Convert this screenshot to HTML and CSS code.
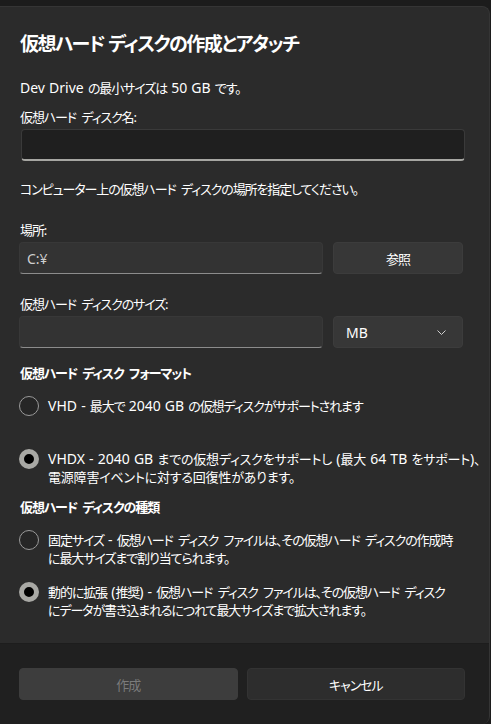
FILE: index.html
```html
<!DOCTYPE html>
<html lang="ja">
<head>
<meta charset="utf-8">
<title>仮想ハード ディスクの作成とアタッチ</title>
<link rel="stylesheet" href="styles.css">
</head>
<body>
<div class="dialog">
  <div class="content">
    <h1 class="title">仮想ハード ディスクの作成とアタッチ</h1>
    <p class="text t-dev"><span class="en">Dev Drive </span>の最小サイズは<span class="en"> 50 GB </span>です。</p>
    <p class="text t-name">仮想ハード ディスク名:</p>
    <div class="field field-focus"></div>
    <p class="text t-loc-desc">コンピューター上の仮想ハード ディスクの場所を指定してください。</p>
    <p class="text t-loc">場所:</p>
    <div class="row">
      <div class="field field-grow"><span class="value en">C:¥</span></div>
      <button class="btn side">参照</button>
    </div>
    <p class="text t-size">仮想ハード ディスクのサイズ:</p>
    <div class="row">
      <div class="field field-grow"></div>
      <div class="btn side combo"><span class="en">MB</span>
        <svg class="chev" width="9" height="5" viewBox="0 0 9 5"><path d="M0.5 0.5 L4.5 4.5 L8.5 0.5" fill="none" stroke="#cfcfcf" stroke-width="1"/></svg>
      </div>
    </div>
    <p class="text heading t-fmt">仮想ハード ディスク フォーマット</p>
    <div class="radio r-vhd"><span class="dot"></span><span class="rlabel"><span class="en">VHD - </span>最大で<span class="en"> 2040 GB </span>の仮想ディスクがサポートされます</span></div>
    <div class="radio r-vhdx"><span class="dot on"></span><span class="rlabel wide"><span class="en">VHDX - 2040 GB </span>までの仮想ディスクをサポートし<span class="en"> (</span>最大<span class="en"> 64 TB </span>をサポート<span class="en">)</span>、<br>電源障害イベントに対する回復性があります。</span></div>
    <p class="text heading t-type">仮想ハード ディスクの種類</p>
    <div class="radio r-fixed"><span class="dot"></span><span class="rlabel">固定サイズ<span class="en"> - </span>仮想ハード ディスク ファイルは、その仮想ハード ディスクの作成時<br>に最大サイズまで割り当てられます。</span></div>
    <div class="radio r-dyn"><span class="dot on"></span><span class="rlabel">動的に拡張<span class="en"> (</span>推奨<span class="en">) - </span>仮想ハード ディスク ファイルは、その仮想ハード ディスク<br>にデータが書き込まれるにつれて最大サイズまで拡大されます。</span></div>
  </div>
  <div class="footer">
    <button class="btn fbtn disabled">作成</button>
    <button class="btn fbtn">キャンセル</button>
  </div>
</div>
</body>
</html>
```
FILE: styles.css
```css
html, body {
  margin: 0;
  padding: 0;
  background: #1c1c1c;
  width: 491px;
  height: 724px;
  overflow: hidden;
}
body {
  font-family: "Noto Sans", "Noto Sans CJK JP", sans-serif;
  font-feature-settings: "palt";
  color: #ffffff;
  font-size: 13px;
  letter-spacing: -1.1px;
  word-spacing: 3px;
}
.en {
  font-size: 14px;
  letter-spacing: 0;
  word-spacing: 0.5px;
}
.dialog {
  margin-top: 6px;
  width: 490px;
  height: 718px;
  background: #2b2b2b;
  border-top: 1px solid #353535;
  border-right: 1px solid #353535;
  border-top-right-radius: 8px;
  border-bottom-right-radius: 8px;
  box-sizing: border-box;
  display: flex;
  flex-direction: column;
  overflow: hidden;
}
.content {
  padding: 23px 26px 0 19px;
  display: flex;
  flex-direction: column;
  height: 613px;
  box-sizing: content-box;
}
.title {
  margin: 0 0 0 1px;
  font-size: 19px;
  line-height: 28px;
  font-weight: 700;
  letter-spacing: -1.5px;
  word-spacing: 1px;
}
.text {
  margin: 0 0 0 1px;
  line-height: 20px;
}
.heading { font-weight: 700; }
.t-dev { margin-top: 20px; }
.t-name { margin-top: 9px; }
.t-loc-desc { margin-top: 18px; }
.t-loc { margin-top: 21px; }
.t-size { margin-top: 20px; }
.t-fmt { margin-top: 15px; }
.t-type { margin-top: 11px; }

.field {
  height: 32px;
  box-sizing: border-box;
  border: 1px solid #383838;
  border-bottom: 1px solid #8c8c8c;
  border-radius: 4px;
  background: #333333;
  margin-top: 2px;
  display: flex;
  align-items: center;
  padding: 0 7px;
}
.field-focus {
  margin-left: 2px;
  margin-right: -2px;
  background: #1f1f1f;
  border-color: #3a3a3a;
  border-bottom: 2px solid #a6a6a2;
}
.row {
  display: flex;
  gap: 10px;
  margin-top: 2px;
  height: 32px;
}
.row .field { margin-top: 0; }
.field-grow { flex: 1; }
.value { color: #cfcfcf; }
.btn {
  font-family: inherit;
  font-feature-settings: "palt";
  font-size: 13px;
  letter-spacing: -1.1px;
  color: #ffffff;
  background: #373737;
  border: 1px solid #3c3c3c;
  border-radius: 4px;
  height: 32px;
  box-sizing: border-box;
  padding: 0;
}
.side { width: 130px; flex: none; }
.combo {
  display: flex;
  align-items: center;
  justify-content: space-between;
  padding: 0 16px 0 12px;
}
.chev { display: block; }

.radio {
  display: flex;
  align-items: flex-start;
  gap: 9px;
  line-height: 18px;
}
.r-vhd { margin-top: 14px; }
.r-vhdx { margin-top: 34px; }
.r-fixed { margin-top: 14px; }
.r-dyn { margin-top: 16px; }
.dot {
  flex: none;
  width: 20px;
  height: 20px;
  box-sizing: border-box;
  border-radius: 50%;
  border: 1px solid #9a9a9a;
  background: #262626;
  margin-top: -1px;
}
.dot.on {
  border: 5px solid #a8a8a4;
  background: #000000;
}
.rlabel { white-space: nowrap; }
.wide { letter-spacing: -0.2px; }

.footer {
  flex: 1;
  background: #202020;
  border-top: 1px solid #1d1d1d;
  display: flex;
  gap: 9px;
  padding: 24px 24px 0 19px;
  box-sizing: border-box;
}
.fbtn {
  width: 220px;
  height: 32px;
}
.disabled {
  background: #3d3d3d;
  border-color: #3d3d3d;
  color: #7b7b7b;
}
.fbtn:not(.disabled) {
  background: #2d2d2d;
  border-color: #333333;
}
```
